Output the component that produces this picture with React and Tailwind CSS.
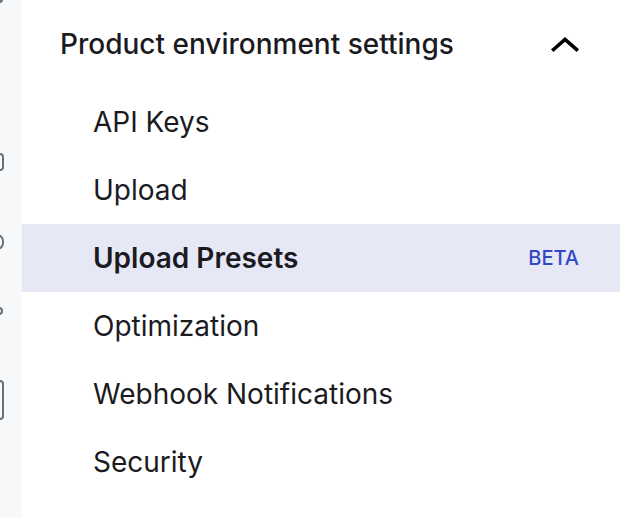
const items = [
    { label: "API Keys" },
    { label: "Upload" },
    { label: "Upload Presets", active: true, badge: "BETA" },
    { label: "Optimization" },
    { label: "Webhook Notifications" },
    { label: "Security" },
];

// cut-off icons from the collapsed rail on the left
function Rail() {
    return (
        <div className="flex w-[22px] shrink-0 flex-col overflow-hidden bg-[#f7f8fa]">
            <div className="-mt-[4px] -ml-[6px] h-[7px] w-[9px] rounded-sm bg-[#6b6f76]" />
            <div className="mt-[150px] -ml-[10px] h-[18px] w-[14px] rounded-[4px] border-[2px] border-[#6b6f76]" />
            <div className="mt-[63px] -ml-[10px] h-[16px] w-[14px] rounded-full border-[2px] border-[#6b6f76]" />
            <div className="mt-[57px] -ml-[6px] h-[8px] w-[9px] rounded-full border-[2px] border-[#6b6f76]" />
            <div className="mt-[65px] -ml-[14px] h-[40px] w-[18px] rounded-[4px] border-[2px] border-[#6b6f76]" />
        </div>
    );
}

export default function App() {
    return (
        <div className="flex h-[518px] w-[620px] bg-white font-['Inter',sans-serif] text-[#1b1b1f]">
            <Rail />
            <div className="flex-1">
                <div className="flex h-[88px] items-center justify-between pl-[38px] pr-[40px]">
                    <span className="text-[28px] font-medium">Product environment settings</span>
                    <svg width="30" height="16" viewBox="0 0 30 16" className="mt-[1px]">
                        <polyline points="3.5,12.5 15,2.5 26.5,12.5" fill="none" stroke="#000" strokeWidth="3.6" strokeLinecap="square" />
                    </svg>
                </div>
                {items.map((item) => (
                    <div
                        key={item.label}
                        className={`flex h-[68px] items-center justify-between pl-[71px] pr-[41px] ${item.active ? "bg-[#e6e8f6]" : ""}`}>
                        <span className={`text-[28px] ${item.active ? "font-semibold" : "font-normal"}`}>{item.label}</span>
                        {item.badge ? <span className="text-[20px] font-medium text-[#3448c5]">{item.badge}</span> : null}
                    </div>
                ))}
            </div>
        </div>
    );
}
